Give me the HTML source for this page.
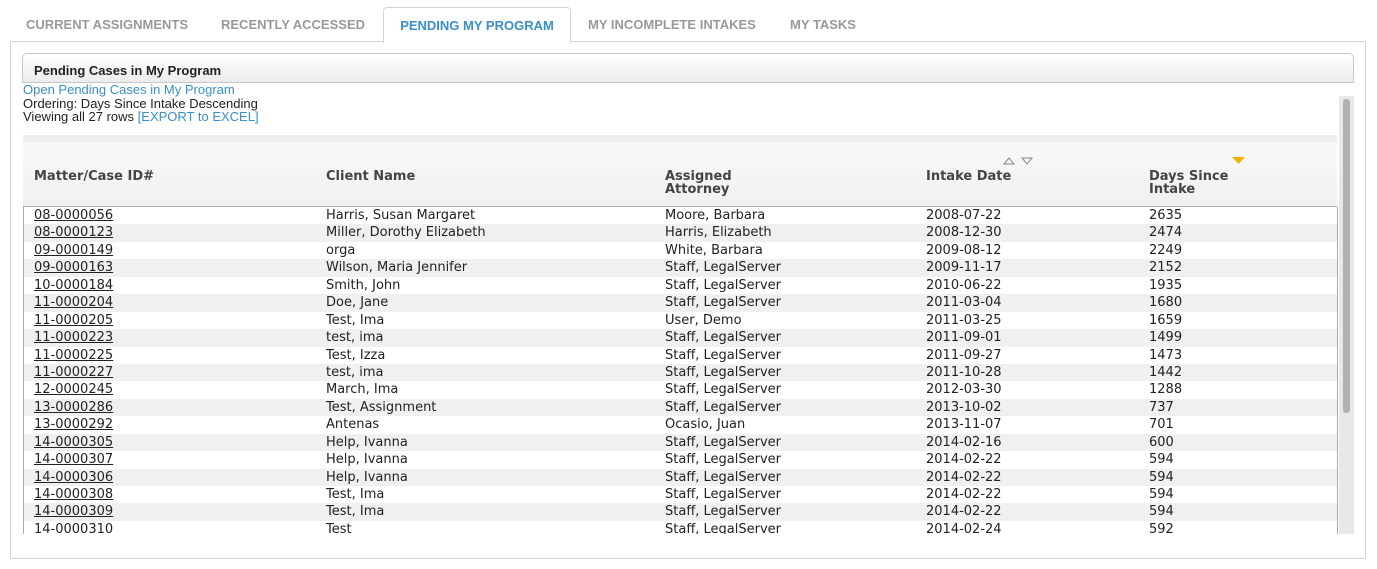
<!DOCTYPE html>
<html><head><style>
*{margin:0;padding:0;box-sizing:border-box}
body{width:1377px;height:569px;background:#fff;font-family:"Liberation Sans",sans-serif;position:relative;overflow:hidden;color:#222}
.tab{position:absolute;top:17px;font-size:13px;font-weight:bold;color:#999}
.atab{position:absolute;left:383px;top:7px;width:188px;height:36px;border:1px solid #d4d4d4;border-bottom:none;border-radius:4px 4px 0 0;background:#fff;color:#3a8fc7;font-size:13px;font-weight:bold;text-align:center;padding-top:10px;z-index:2}
.outer{position:absolute;left:10px;top:41px;width:1356px;height:518px;border:1px solid #d4d4d4}
.panel{position:absolute;left:22px;top:53px;width:1332px;height:30px;border:1px solid #c8c8c8;border-radius:5px 5px 0 0;background:linear-gradient(#fff,#ececec);font-size:13px;font-weight:bold;padding:9px 11px}
.info{position:absolute;left:23px;top:83px;font-size:13px;line-height:13.5px}
a{color:#3a8fc7;text-decoration:none}
.hdr{position:absolute;left:23px;top:135px;width:1314px;height:72px;background:linear-gradient(#f9f9f9,#f0f0f0);border-top:7px solid #ececec;border-bottom:1px solid #aaa}
.h{position:absolute;top:170px;font-family:"DejaVu Sans",sans-serif;font-weight:bold;font-size:13px;color:#444;line-height:13px}
.body{position:absolute;left:23px;top:207px;width:1315px;height:327px;overflow:hidden;border-left:1px solid #aaa;border-right:1px solid #aaa}
.r{height:17.45px;position:relative;font-family:"DejaVu Sans",sans-serif;font-size:13px;line-height:17.45px}
.r:nth-child(even){background:#f0f0f0}
.r span{position:absolute;top:0}
.r span:first-child{text-decoration:underline}
.c1{left:10px}.c2{left:302px}.c3{left:641px}.c4{left:902px}.c5{left:1125px}
.sb{position:absolute;left:1339px;top:96px;width:15px;height:438px;background:#e8e8e8}
.th{position:absolute;left:1343px;top:99px;width:7px;height:314px;background:#b0b0b0;border-radius:3px}
</style></head><body>
<div class="tab" style="left:26px">CURRENT ASSIGNMENTS</div>
<div class="tab" style="left:221px">RECENTLY ACCESSED</div>
<div class="tab" style="left:588px">MY INCOMPLETE INTAKES</div>
<div class="tab" style="left:790px">MY TASKS</div>
<div class="outer"></div>
<div class="atab">PENDING MY PROGRAM</div>
<div class="panel">Pending Cases in My Program</div>
<div class="info"><a>Open Pending Cases in My Program</a><br>Ordering: Days Since Intake Descending<br>Viewing all 27 rows <a>[EXPORT to EXCEL]</a></div>
<div class="hdr"></div>
<div class="h" style="left:34px">Matter/Case ID#</div>
<div class="h" style="left:326px">Client Name</div>
<div class="h" style="left:665px">Assigned<br>Attorney</div>
<div class="h" style="left:926px">Intake Date</div>
<div class="h" style="left:1149px">Days Since<br>Intake</div>
<svg style="position:absolute;left:1003px;top:156px" width="32" height="10"><path d="M1 8 L6 2 L11 8 Z" fill="none" stroke="#888"/><path d="M19 2 L29 2 L24 8 Z" fill="none" stroke="#888"/></svg>
<svg style="position:absolute;left:1232px;top:157px" width="14" height="8"><path d="M0 0 L13 0 L6.5 7 Z" fill="#f0b400"/></svg>
<div class="body">
<div class="r"><span class="c1">08-0000056</span><span class="c2">Harris, Susan Margaret</span><span class="c3">Moore, Barbara</span><span class="c4">2008-07-22</span><span class="c5">2635</span></div>
<div class="r"><span class="c1">08-0000123</span><span class="c2">Miller, Dorothy Elizabeth</span><span class="c3">Harris, Elizabeth</span><span class="c4">2008-12-30</span><span class="c5">2474</span></div>
<div class="r"><span class="c1">09-0000149</span><span class="c2">orga</span><span class="c3">White, Barbara</span><span class="c4">2009-08-12</span><span class="c5">2249</span></div>
<div class="r"><span class="c1">09-0000163</span><span class="c2">Wilson, Maria Jennifer</span><span class="c3">Staff, LegalServer</span><span class="c4">2009-11-17</span><span class="c5">2152</span></div>
<div class="r"><span class="c1">10-0000184</span><span class="c2">Smith, John</span><span class="c3">Staff, LegalServer</span><span class="c4">2010-06-22</span><span class="c5">1935</span></div>
<div class="r"><span class="c1">11-0000204</span><span class="c2">Doe, Jane</span><span class="c3">Staff, LegalServer</span><span class="c4">2011-03-04</span><span class="c5">1680</span></div>
<div class="r"><span class="c1">11-0000205</span><span class="c2">Test, Ima</span><span class="c3">User, Demo</span><span class="c4">2011-03-25</span><span class="c5">1659</span></div>
<div class="r"><span class="c1">11-0000223</span><span class="c2">test, ima</span><span class="c3">Staff, LegalServer</span><span class="c4">2011-09-01</span><span class="c5">1499</span></div>
<div class="r"><span class="c1">11-0000225</span><span class="c2">Test, Izza</span><span class="c3">Staff, LegalServer</span><span class="c4">2011-09-27</span><span class="c5">1473</span></div>
<div class="r"><span class="c1">11-0000227</span><span class="c2">test, ima</span><span class="c3">Staff, LegalServer</span><span class="c4">2011-10-28</span><span class="c5">1442</span></div>
<div class="r"><span class="c1">12-0000245</span><span class="c2">March, Ima</span><span class="c3">Staff, LegalServer</span><span class="c4">2012-03-30</span><span class="c5">1288</span></div>
<div class="r"><span class="c1">13-0000286</span><span class="c2">Test, Assignment</span><span class="c3">Staff, LegalServer</span><span class="c4">2013-10-02</span><span class="c5">737</span></div>
<div class="r"><span class="c1">13-0000292</span><span class="c2">Antenas</span><span class="c3">Ocasio, Juan</span><span class="c4">2013-11-07</span><span class="c5">701</span></div>
<div class="r"><span class="c1">14-0000305</span><span class="c2">Help, Ivanna</span><span class="c3">Staff, LegalServer</span><span class="c4">2014-02-16</span><span class="c5">600</span></div>
<div class="r"><span class="c1">14-0000307</span><span class="c2">Help, Ivanna</span><span class="c3">Staff, LegalServer</span><span class="c4">2014-02-22</span><span class="c5">594</span></div>
<div class="r"><span class="c1">14-0000306</span><span class="c2">Help, Ivanna</span><span class="c3">Staff, LegalServer</span><span class="c4">2014-02-22</span><span class="c5">594</span></div>
<div class="r"><span class="c1">14-0000308</span><span class="c2">Test, Ima</span><span class="c3">Staff, LegalServer</span><span class="c4">2014-02-22</span><span class="c5">594</span></div>
<div class="r"><span class="c1">14-0000309</span><span class="c2">Test, Ima</span><span class="c3">Staff, LegalServer</span><span class="c4">2014-02-22</span><span class="c5">594</span></div>
<div class="r"><span class="c1" style="text-decoration:none">14-0000310</span><span class="c2">Test</span><span class="c3">Staff, LegalServer</span><span class="c4">2014-02-24</span><span class="c5">592</span></div>
</div>
<div class="sb"></div><div class="th"></div>
</body></html>
